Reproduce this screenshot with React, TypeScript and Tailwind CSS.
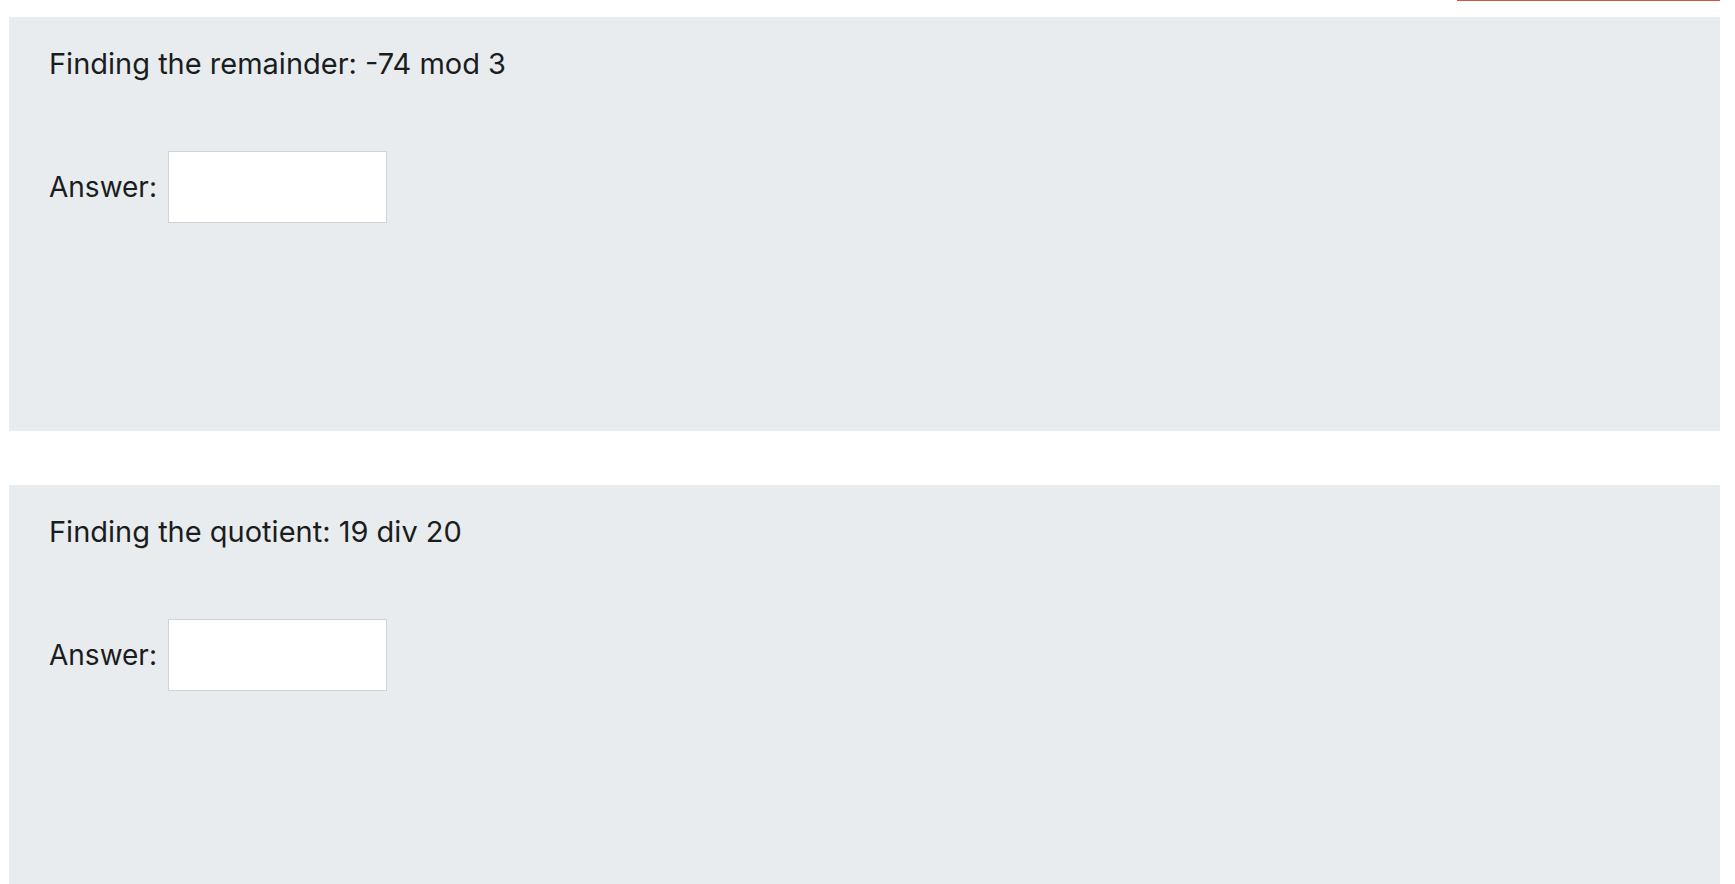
const questions = [
  { id: 1, text: 'Finding the remainder: -74 mod 3' },
  { id: 2, text: 'Finding the quotient: 19 div 20' },
];

function Question({ text }: { text: string }) {
  return (
    <div className="h-[414px] bg-[#e9ecee] pt-[26px] px-[40px]">
      <p className="text-[29px] leading-[42px] text-[#1a1d20]">{text}</p>
      <div className="mt-[66px] flex items-center gap-[11px]">
        <label className="text-[28px] leading-[42px] text-[#1a1d20]">Answer:</label>
        <input
          type="text"
          className="h-[72px] w-[219px] border border-[#ced4da] bg-white outline-none"
        />
      </div>
    </div>
  );
}

export default function App() {
  return (
    <div className="min-h-screen bg-white font-['Inter',sans-serif] overflow-hidden">
      <div className="pl-[9px] pr-[15px]">
        <div className="flex justify-end">
          <div className="h-px w-[263px] bg-[#d35745]" />
        </div>
        <div className="mt-[16px] flex flex-col gap-[54px]">
          {questions.map((q) => (
            <Question key={q.id} text={q.text} />
          ))}
        </div>
      </div>
    </div>
  );
}
